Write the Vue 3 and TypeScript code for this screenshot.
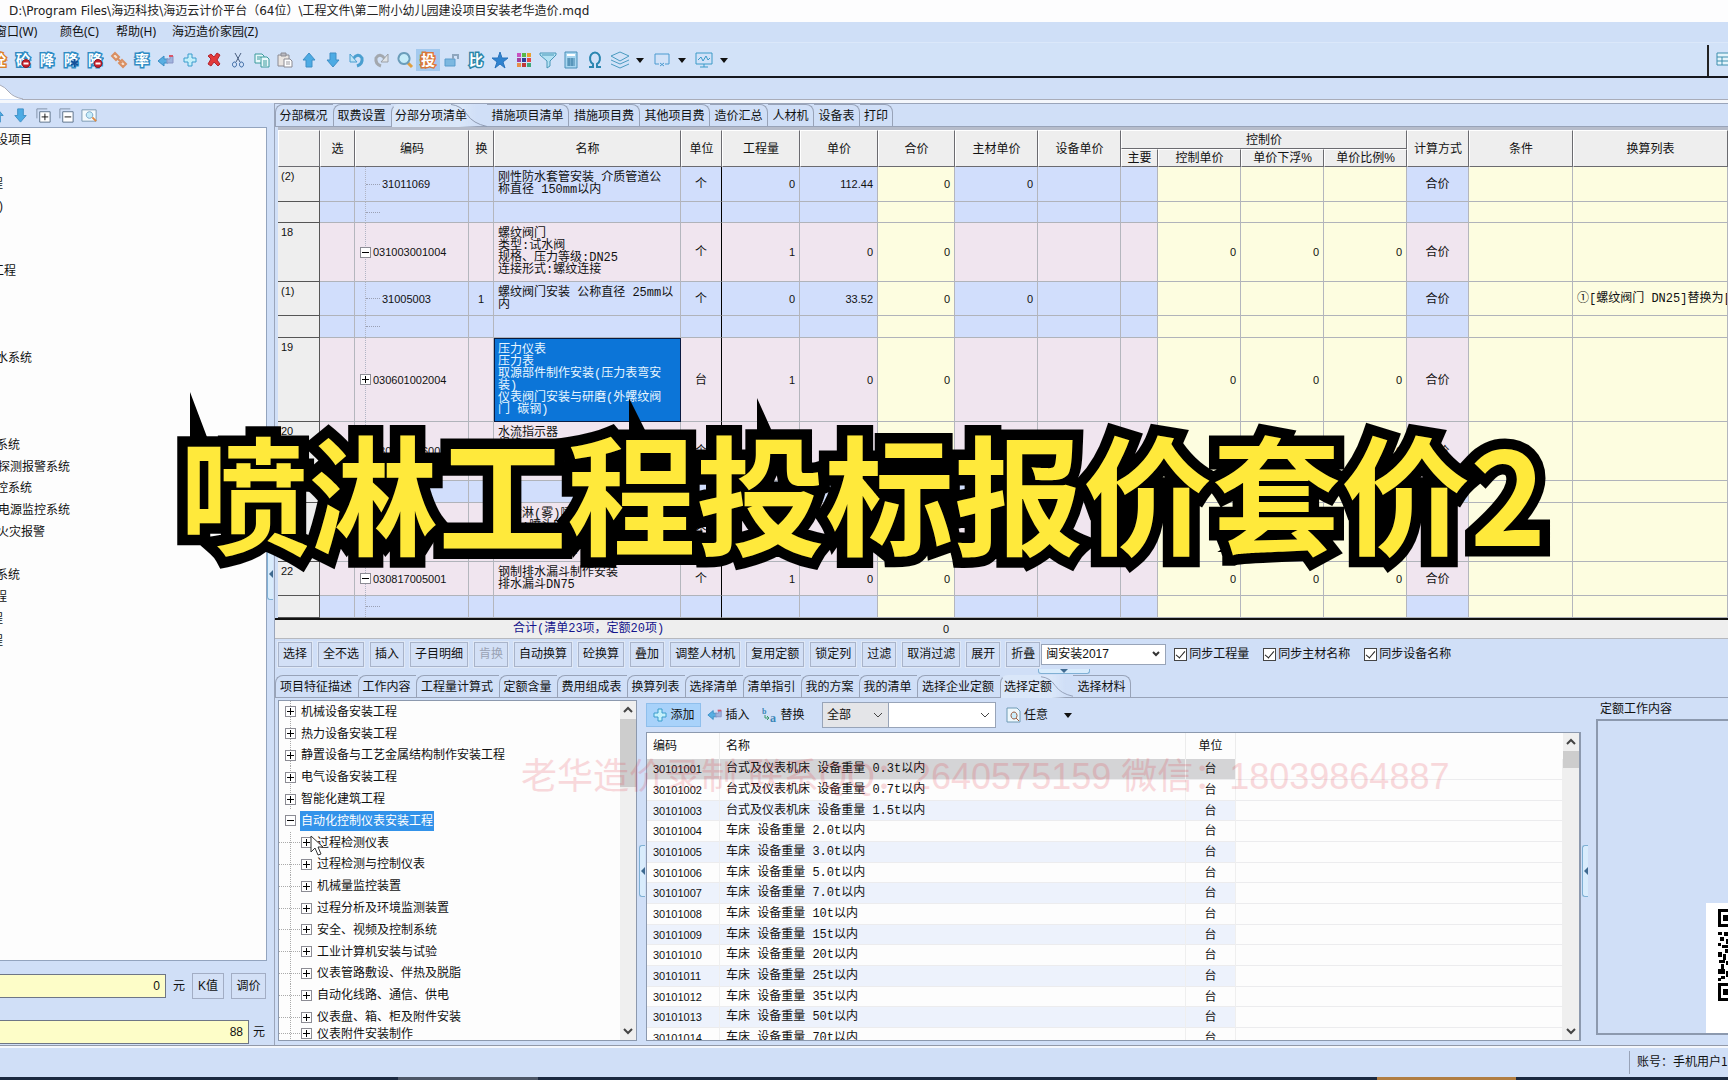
<script setup lang="ts">
import { ref } from 'vue'

interface Shape { d: string; fill?: string; stroke?: string; w?: number }
interface Icon { name: string; glyph?: string; tint?: string; shapes?: Shape[]; on?: boolean; menu?: boolean }

const blue = '#2f8cc4'
const minus: Shape[] = [
  { d: 'M11 7.500a4 4 0 1 0 .01 0z', fill: '#c8202c', stroke: '#8e1520' },
  { d: 'M8.500 11.500h5', stroke: '#fff', w: 2 },
]
const arrowLeft: Shape[] = [
  { d: 'M0 9l6-5v3h4v4H6v3z', fill: '#58aee2', stroke: '#3a8ec4' },
  { d: 'M9 7h3V4h3v7H9z', fill: '#9fb4dd', stroke: '#8a95c4' },
  { d: 'M11 4h4', stroke: '#d8566a', w: 2 },
]
const plus: Shape[] = [{ d: 'M6 2h4v4h4v4h-4v4H6v-4H2V6h4z', fill: '#c4f0fa', stroke: '#3b9ccc' }]
const up: Shape[] = [{ d: 'M8 1l6 7h-3v7H5V8H2z', fill: '#4cabe4', stroke: '#3f8fc6' }]
const down: Shape[] = [{ d: 'M8 15l6-7h-3V1H5v7H2z', fill: '#4cabe4', stroke: '#3f8fc6' }]

const tools: Icon[] = [
  { name: '锁定', glyph: '砼', tint: '#d9822b' },
  { name: '取消砼', glyph: '砼', tint: blue, shapes: minus },
  { name: '降', glyph: '降', tint: blue },
  { name: '全部降', glyph: '降', tint: blue, shapes: [{ d: 'M11.500 7v8M8 9l7 4M15 9l-7 4', stroke: '#14509a', w: 2 }] },
  { name: '取消降', glyph: '降', tint: blue, shapes: minus },
  { name: '链接', shapes: [{ d: 'M4 1l4 4-3 3-4-4zM11 8l4 4-3 3-4-4zM6 6l5 5', stroke: '#d98f62', w: 2, fill: '#f7e3d2' }] },
  { name: '费率', glyph: '率', tint: blue },
  { name: '插入', shapes: arrowLeft },
  { name: '增加', shapes: plus },
  { name: '删除', shapes: [{ d: 'M2 4l3-2 3 3 3-4 3 2-3 5 3 4-2 2-4-4-3 4-3-2 3-5z', fill: '#e23a3a', stroke: '#b02530' }] },
  { name: '剪切', shapes: [{ d: 'M5 1l5 9M11 1L6 10', stroke: '#4a5f80', w: 1 }, { d: 'M4.500 10a2 2.500 0 1 0 .01 0zM11.500 10a2 2.500 0 1 0 .01 0z', stroke: '#2f5f9c', w: 1 }] },
  { name: '复制', shapes: [{ d: 'M1 2h7l2 2v7H1z', fill: '#e8f8fb', stroke: '#3a9a9c' }, { d: 'M3 5h4M3 7h3', stroke: '#3a9a9c' }, { d: 'M7 5h6l2 2v8H7z', fill: '#e8f8fb', stroke: '#3a9a9c' }, { d: 'M9 9h4M9 11h4M9 13h4', stroke: '#3a9a9c' }] },
  { name: '粘贴', shapes: [{ d: 'M1 3h11v11H1z', fill: '#e9e4e0', stroke: '#8a8a92' }, { d: 'M4 1h5v3H4z', fill: '#b9b9c0', stroke: '#8a8a92' }, { d: 'M7 7h6l2 2v6H7z', fill: '#fff', stroke: '#8a8a92' }, { d: 'M9 10h4M9 12h4', stroke: '#9a9aa0' }] },
  { name: '上移', shapes: up },
  { name: '下移', shapes: down },
  { name: '撤销', shapes: [{ d: 'M4 7q5-7 9-1 1 6-5 8', stroke: '#4a9fd0', w: 3 }, { d: 'M1 2v8h7z', fill: '#bfe4f6', stroke: '#4a9fd0' }] },
  { name: '恢复', shapes: [{ d: 'M12 7q-5-7-9-1-1 6 5 8', stroke: '#a3a8ae', w: 3 }, { d: 'M15 2v8H8z', fill: '#dfe3e6', stroke: '#9a9fa6' }] },
  { name: '查找', shapes: [{ d: 'M10 10l5 5', stroke: '#e0a040', w: 3 }, { d: 'M7 1a5.500 5.500 0 1 0 .01 0z', fill: '#c5ecf9', stroke: '#6a9dba', w: 2 }] },
  { name: '投标', glyph: '投', tint: '#d9783a', on: true },
  { name: '解锁', shapes: [{ d: 'M1 7h10v7H1z', fill: '#7db8e0', stroke: '#5a9ccc' }, { d: 'M9 7V3h5v4', stroke: '#8ea6be', w: 2 }] },
  { name: '对比', glyph: '比', tint: '#2a86a8' },
  { name: '收藏', shapes: [{ d: 'M8 0l2 6h6l-5 4 2 6-5-4-5 4 2-6-5-4h6z', fill: '#2f83d0', stroke: '#2a74bc' }] },
  { name: '颜色', shapes: [
    { d: 'M1 1h4v4H1z', fill: '#c950c0' }, { d: 'M6 1h4v4H6z', fill: '#58b848' }, { d: 'M11 1h4v4h-4z', fill: '#e8a030' },
    { d: 'M1 6h4v4H1z', fill: '#a040a0' }, { d: 'M6 6h4v4H6z', fill: '#303c98' }, { d: 'M11 6h4v4h-4z', fill: '#e04848' },
    { d: 'M1 11h4v4H1z', fill: '#e89048' }, { d: 'M6 11h4v4H6z', fill: '#c03838' }, { d: 'M11 11h4v4h-4z', fill: '#40a878' } ] },
  { name: '筛选', shapes: [{ d: 'M0 1h16v2l-6 6v5l-3 2V9L0 3z', fill: '#b4e2f4', stroke: '#4a97b8' }, { d: 'M2 3h12', stroke: '#4a97b8' }] },
  { name: '计算器', shapes: [{ d: 'M2 0h12v16H2z', fill: '#a8d6f0', stroke: '#4a8fb8' }, { d: 'M4 3h8', stroke: '#fff', w: 2 }, { d: 'M4 7h8M4 9h8M4 11h8M4 13h8M6 6v8M9 6v8', stroke: '#3f80a8' }] },
  { name: '特殊符号', shapes: [{ d: 'M2 15h4v-3a5 6 0 1 1 4 0v3h4', stroke: '#2a86b0', w: 2 }] },
  { name: '图层', menu: true, shapes: [{ d: 'M8 0l9 4-9 5-9-5z', stroke: '#4a9ac0' }, { d: 'M-1 8l9 4 9-4M-1 12l9 4 9-4', stroke: '#4a9ac0' }] },
  { name: '屏幕', menu: true, shapes: [{ d: 'M5 12H1V2h14v10h-4', stroke: '#4a9ad0' }, { d: 'M6 11l4 3M10 11l-4 3', stroke: '#4a9ad0' }] },
  { name: '监控', menu: true, shapes: [{ d: 'M0 1h16v11H0zM8 12v3M4 15h8', stroke: '#3a9ac8' }, { d: 'M2 8l3-3 2 4 3-5 2 4 2-2', stroke: '#3a9ac8' }] },
]

const sideTools: Icon[] = [
  { name: '上移', shapes: up },
  { name: '下移', shapes: down },
  { name: '展开', shapes: [{ d: 'M1 11V1h11', stroke: '#7f92a8' }, { d: 'M4 4h11v11H4z', fill: '#fff', stroke: '#5a7088' }, { d: 'M6 9.500h7M9.500 6v7', stroke: '#111' }] },
  { name: '收起', shapes: [{ d: 'M1 11V1h11', stroke: '#7f92a8' }, { d: 'M4 4h11v11H4z', fill: '#fff', stroke: '#5a7088' }, { d: 'M6 9.500h7', stroke: '#111' }] },
  { name: '查找', shapes: [{ d: 'M0 2h15v12H0z', fill: '#f4fafc', stroke: '#7a98b0' }, { d: 'M8 4a3.500 3.500 0 1 0 .01 0z', fill: '#c5ecf9', stroke: '#7aa8c8' }, { d: 'M11 10l4 4', stroke: '#e08a40', w: 2 }] },
]

const sideNodes: { t: string; end: number }[] = [
  { t: '设项目', end: 32 }, { t: '', end: 0 }, { t: '程', end: 3 }, { t: ')', end: 3 }, { t: '', end: 0 }, { t: '', end: 0 },
  { t: '工程', end: 16 }, { t: '', end: 0 }, { t: '', end: 0 }, { t: '', end: 0 }, { t: '水系统', end: 32 }, { t: '', end: 0 },
  { t: '', end: 0 }, { t: '', end: 0 }, { t: '系统', end: 20 }, { t: '探测报警系统', end: 70 }, { t: '控系统', end: 32 },
  { t: '电源监控系统', end: 70 }, { t: '火灾报警', end: 45 }, { t: '', end: 0 }, { t: '系统', end: 20 }, { t: '程', end: 7 },
  { t: '程', end: 3 }, { t: '程', end: 3 },
]

interface Tab { t: string; w: number; side: 'l' | 'r' | 'on' }
const topTabs: Tab[] = [
  { t: '分部概况', w: 58, side: 'l' }, { t: '取费设置', w: 58, side: 'l' }, { t: '分部分项清单', w: 96, side: 'on' },
  { t: '措施项目清单', w: 82, side: 'r' }, { t: '措施项目费', w: 71, side: 'r' }, { t: '其他项目费', w: 70, side: 'r' },
  { t: '造价汇总', w: 58, side: 'r' }, { t: '人材机', w: 46, side: 'r' }, { t: '设备表', w: 46, side: 'r' }, { t: '打印', w: 33, side: 'r' },
]
const lowTabs: Tab[] = [
  { t: '项目特征描述', w: 83, side: 'l' }, { t: '工作内容', w: 58, side: 'l' }, { t: '工程量计算式', w: 83, side: 'l' },
  { t: '定额含量', w: 58, side: 'l' }, { t: '费用组成表', w: 70, side: 'l' }, { t: '换算列表', w: 58, side: 'l' },
  { t: '选择清单', w: 58, side: 'l' }, { t: '清单指引', w: 58, side: 'l' }, { t: '我的方案', w: 58, side: 'l' },
  { t: '我的清单', w: 58, side: 'l' }, { t: '选择企业定额', w: 83, side: 'l' }, { t: '选择定额', w: 73, side: 'on' },
  { t: '选择材料', w: 58, side: 'r' },
]

const colWidths = [42, 35, 114, 25, 187, 41, 78, 78, 77, 83, 83, 37, 83, 83, 83, 62, 104]

interface Row {
  no: string; kind: 'item' | 'sub'; h: number; code?: string; open?: boolean; swap?: string; name?: string[]
  unit?: string; qty?: string; price?: string; total?: string; main?: string; ctl?: string; mode?: string; list?: string; sel?: boolean
}
const rows: Row[] = [
  { no: '(2)', kind: 'sub', h: 35, code: '31011069', name: ['刚性防水套管安装 介质管道公', '称直径 150mm以内'], unit: '个', qty: '0', price: '112.44', total: '0', main: '0', mode: '合价' },
  { no: '', kind: 'sub', h: 21 },
  { no: '18', kind: 'item', h: 59, code: '031003001004', open: true, name: ['螺纹阀门', '类型:试水阀', '规格、压力等级:DN25', '连接形式:螺纹连接'], unit: '个', qty: '1', price: '0', total: '0', ctl: '0', mode: '合价' },
  { no: '(1)', kind: 'sub', h: 34, code: '31005003', swap: '1', name: ['螺纹阀门安装 公称直径 25mm以', '内'], unit: '个', qty: '0', price: '33.52', total: '0', main: '0', mode: '合价', list: '①[螺纹阀门 DN25]替换为[试水阀]' },
  { no: '', kind: 'sub', h: 22 },
  { no: '19', kind: 'item', h: 84, code: '030601002004', open: false, sel: true, name: ['压力仪表', '压力表', '取源部件制作安装(压力表弯安', '装)', '仪表阀门安装与研磨(外螺纹阀', '门 碳钢)'], unit: '台', qty: '1', price: '0', total: '0', ctl: '0', mode: '合价' },
  { no: '20', kind: 'item', h: 59, code: '030901006001', open: true, name: ['水流指示器', '规格:DN150', '型号:法兰式', '连接形式:法兰'], unit: '个', qty: '1', price: '0', total: '0', ctl: '0', mode: '合价' },
  { no: '', kind: 'sub', h: 22 },
  { no: '21', kind: 'item', h: 59, code: '030901003001', open: true, name: ['水喷淋(雾)喷头', '规格:喷头DN15', '安装部位:吊顶', '连接形式:螺纹'], unit: '个', qty: '1', price: '0', total: '0', ctl: '0', mode: '合价' },
  { no: '22', kind: 'item', h: 34, code: '030817005001', open: true, name: ['钢制排水漏斗制作安装', '排水漏斗DN75'], unit: '个', qty: '1', price: '0', total: '0', ctl: '0', mode: '合价' },
  { no: '', kind: 'sub', h: 22 },
]

const actions = ['选择', '全不选', '插入', '子目明细', '肯换', '自动换算', '砼换算', '叠加', '调整人材机', '复用定额', '锁定列', '过滤', '取消过滤', '展开', '折叠']
const syncs = ref([
  { t: '同步工程量', on: true }, { t: '同步主材名称', on: true }, { t: '同步设备名称', on: true },
])

const chapters: { t: string; lvl: number; open?: boolean }[] = [
  { t: '机械设备安装工程', lvl: 0 }, { t: '热力设备安装工程', lvl: 0 }, { t: '静置设备与工艺金属结构制作安装工程', lvl: 0 },
  { t: '电气设备安装工程', lvl: 0 }, { t: '智能化建筑工程', lvl: 0 }, { t: '自动化控制仪表安装工程', lvl: 0, open: true },
  { t: '过程检测仪表', lvl: 1 }, { t: '过程检测与控制仪表', lvl: 1 }, { t: '机械量监控装置', lvl: 1 }, { t: '过程分析及环境监测装置', lvl: 1 },
  { t: '安全、视频及控制系统', lvl: 1 }, { t: '工业计算机安装与试验', lvl: 1 }, { t: '仪表管路敷设、伴热及脱脂', lvl: 1 },
  { t: '自动化线路、通信、供电', lvl: 1 }, { t: '仪表盘、箱、柜及附件安装', lvl: 1 }, { t: '仪表附件安装制作', lvl: 1 },
]

const quotas = [
  '台式及仪表机床 设备重量 0.3t以内', '台式及仪表机床 设备重量 0.7t以内', '台式及仪表机床 设备重量 1.5t以内',
  '车床 设备重量 2.0t以内', '车床 设备重量 3.0t以内', '车床 设备重量 5.0t以内', '车床 设备重量 7.0t以内',
  '车床 设备重量 10t以内', '车床 设备重量 15t以内', '车床 设备重量 20t以内', '车床 设备重量 25t以内',
  '车床 设备重量 35t以内', '车床 设备重量 50t以内', '车床 设备重量 70t以内',
].map((name, i) => ({ code: String(30101001 + i), name }))
</script>

<template>
  <div class="app">
    <header class="title">D:\Program Files\海迈科技\海迈云计价平台（64位）\工程文件\第二附小幼儿园建设项目安装老华造价.mqd</header>
    <nav class="menu">
      <button class="first">窗口(W)</button><button>颜色(C)</button><button>帮助(H)</button><button>海迈造价家园(Z)</button>
    </nav>

    <div class="toolbar">
      <div class="tools">
        <button v-for="(ic, i) in tools" :key="i" :aria-label="ic.name" :class="{ on: ic.on, drop: ic.menu }">
          <svg width="18" height="18" viewBox="-1 -1 18 18">
            <text v-if="ic.glyph" x="8" y="13" class="glyph" :stroke="ic.tint">{{ ic.glyph }}</text>
            <path v-for="(s, k) in ic.shapes" :key="k" :d="s.d" :fill="s.fill || 'none'" :stroke="s.stroke || 'none'" :stroke-width="s.w || 1" />
          </svg>
          <i v-if="ic.menu" class="caret"></i>
        </button>
      </div>
      <div class="tools-end">
        <svg width="14" height="16" viewBox="0 0 14 16"><path d="M1 2h16v12H1zM1 6h16M6 6v8M1 10h16" fill="#e4f4fb" stroke="#3f8fae" /></svg>
      </div>
    </div>

    <div class="doc-strip">
      <svg width="24" height="22" viewBox="0 0 24 22"><path d="M0 7q5 2 9 7t13 7H0z" fill="#fff" /><path d="M0 7q5 2 9 7t14 7" fill="none" stroke="#a9acb8" /></svg>
    </div>

    <main class="work">
      <aside class="side">
        <div class="side-tools">
          <button v-for="(ic, i) in sideTools" :key="i" :aria-label="ic.name">
            <svg width="17" height="17" viewBox="-1 -1 18 18">
              <path v-for="(s, k) in ic.shapes" :key="k" :d="s.d" :fill="s.fill || 'none'" :stroke="s.stroke || 'none'" :stroke-width="s.w || 1" />
            </svg>
          </button>
        </div>
        <ul class="side-tree">
          <li v-for="(n, i) in sideNodes" :key="i" :style="{ width: n.end + 'px' }">{{ n.t }}</li>
        </ul>
        <div class="sum">
          <input class="money" aria-label="造价合计" value="0" />
          <span>元</span><button>K值</button><button>调价</button>
        </div>
        <div class="sum last">
          <input class="money" aria-label="单方造价" value="88" />
          <span>元</span>
        </div>
      </aside>

      <div class="split-v"><i class="grip"></i></div>

      <section class="content">
        <div class="tabs">
          <button v-for="t in topTabs" :key="t.t" :class="t.side" :style="{ width: t.w + 'px' }">
            <span>{{ t.t }}</span>
            <svg v-if="t.side === 'on'" class="slope" width="36" height="23" viewBox="0 0 36 23"><path d="M0 .5q10 1 16 10t20 12" /></svg>
          </button>
        </div>

        <div class="grid-wrap">
          <table class="grid">
            <colgroup><col v-for="(w, i) in colWidths" :key="i" :style="{ width: w + 'px' }" /><col /></colgroup>
            <thead>
              <tr class="h1">
                <th rowspan="2"></th><th rowspan="2">选</th><th rowspan="2">编码</th><th rowspan="2">换</th><th rowspan="2">名称</th>
                <th rowspan="2">单位</th><th rowspan="2">工程量</th><th rowspan="2">单价</th><th rowspan="2">合价</th><th rowspan="2">主材单价</th>
                <th rowspan="2">设备单价</th><th colspan="4">控制价</th><th rowspan="2">计算方式</th><th rowspan="2">条件</th><th rowspan="2">换算列表</th>
              </tr>
              <tr class="h2"><th>主要</th><th>控制单价</th><th>单价下浮%</th><th>单价比例%</th></tr>
            </thead>
            <tbody>
              <tr v-for="(r, i) in rows" :key="i" :class="r.kind" :style="{ height: r.h + 'px' }">
                <th scope="row">{{ r.no }}</th>
                <td></td>
                <td class="code">
                  <div class="branch">
                    <i v-if="r.kind === 'item'" class="box" :class="{ plus: !r.open }"></i><i v-else class="stub"></i>
                    <span>{{ r.code }}</span>
                  </div>
                </td>
                <td class="c n">{{ r.swap }}</td>
                <td class="name" :class="{ sel: r.sel }"><div v-for="(l, k) in r.name" :key="k">{{ l }}</div></td>
                <td class="c frozen">{{ r.unit }}</td>
                <td class="n">{{ r.qty }}</td><td class="n">{{ r.price }}</td><td class="n y">{{ r.total }}</td>
                <td class="n">{{ r.main }}</td><td></td><td></td>
                <td class="n y">{{ r.ctl }}</td><td class="n y">{{ r.ctl }}</td><td class="n y">{{ r.ctl }}</td>
                <td class="c">{{ r.mode }}</td><td class="y"></td><td class="y list">{{ r.list }}</td>
              </tr>
            </tbody>
          </table>
        </div>
        <div class="totals"><span class="label">合计(清单23项，定额20项)</span><span class="value">0</span></div>

        <div class="actions">
          <button v-for="a in actions" :key="a" :disabled="a === '肯换'">{{ a }}</button>
          <div class="pick lib">
            <select aria-label="定额库"><option>闽安装2017</option></select>
            <svg width="8" height="6" viewBox="0 0 8 6"><path d="M1 1l3 3 3-3" fill="none" stroke="#333" stroke-width="2" /></svg>
          </div>
          <label v-for="s in syncs" :key="s.t"><input v-model="s.on" type="checkbox" />{{ s.t }}</label>
          <i class="grip-h"></i>
        </div>

        <div class="tabs low">
          <button v-for="t in lowTabs" :key="t.t" :class="t.side" :style="{ width: t.w + 'px' }">
            <span>{{ t.t }}</span>
            <svg v-if="t.side === 'on'" class="slope" width="32" height="23" viewBox="0 0 36 23"><path d="M0 .5q10 1 16 10t20 12" /></svg>
          </button>
        </div>

        <div class="lower">
          <div class="chapters">
            <ul>
              <li v-for="c in chapters" :key="c.t" :class="['lvl' + c.lvl, { open: c.open }]">
                <i class="box" :class="{ plus: !c.open }"></i><span>{{ c.t }}</span>
              </li>
            </ul>
            <div class="scroll">
              <svg width="10" height="8" viewBox="0 0 10 8"><path d="M1 6l4-4 4 4" /></svg>
              <i class="thumb long"></i>
              <svg width="10" height="8" viewBox="0 0 10 8"><path d="M1 2l4 4 4-4" /></svg>
            </div>
            <svg class="pointer" width="14" height="21" viewBox="0 0 14 21"><path d="M1 1v16l4-4 3 7 3-1-3-7h5z" fill="#fff" stroke="#333" /></svg>
          </div>
          <div class="split-v inner"><i class="grip"></i></div>

          <div class="finder">
            <div class="finder-bar">
              <button class="act on"><svg width="16" height="16" viewBox="0 0 16 16"><path v-for="(s, k) in plus" :key="k" :d="s.d" :fill="s.fill" :stroke="s.stroke" /></svg>添加</button>
              <button class="act"><svg width="16" height="16" viewBox="0 0 16 18"><path v-for="(s, k) in arrowLeft" :key="k" :d="s.d" :fill="s.fill || 'none'" :stroke="s.stroke" :stroke-width="s.w || 1" /></svg>插入</button>
              <button class="act rep">
                <svg width="16" height="16" viewBox="0 0 16 16"><text x="0" y="7" class="small">b</text><path d="M3 8v3h4M5 9l2 2-2 2" fill="none" stroke="#3a9a6a" /><text x="8" y="15" class="small big">a</text></svg>替换
              </button>
              <div class="pick all"><select aria-label="范围"><option>全部</option></select><svg width="10" height="7" viewBox="0 0 10 7"><path d="M1 1l4 4 4-4" fill="none" stroke="#444" /></svg></div>
              <div class="pick key"><select aria-label="关键字"><option></option></select><svg width="10" height="7" viewBox="0 0 10 7"><path d="M1 1l4 4 4-4" fill="none" stroke="#444" /></svg></div>
              <button class="act any">
                <svg width="16" height="16" viewBox="0 0 16 16"><path d="M1 1h10l3 3v11H1z" fill="#eef8fc" stroke="#6f9ab4" /><path d="M8 5a3 3.500 0 1 0 .01 0zM10 11l3 3" fill="#cdeefa" stroke="#9a5a3a" /></svg>任意<i class="caret"></i>
              </button>
            </div>
            <div class="quota">
              <table>
                <colgroup><col class="q1" /><col class="q2" /><col class="q3" /><col /></colgroup>
                <thead><tr><th>编码</th><th>名称</th><th class="c">单位</th><th></th></tr></thead>
                <tbody>
                  <tr v-for="q in quotas" :key="q.code"><td class="n">{{ q.code }}</td><td class="m">{{ q.name }}</td><td class="c">台</td><td></td></tr>
                </tbody>
              </table>
              <div class="scroll">
                <svg width="10" height="8" viewBox="0 0 10 8"><path d="M1 6l4-4 4 4" /></svg>
                <i class="thumb"></i>
                <svg width="10" height="8" viewBox="0 0 10 8"><path d="M1 2l4 4 4-4" /></svg>
              </div>
            </div>
          </div>
          <div class="split-v inner far"><i class="grip"></i></div>

          <div class="detail">
            <h2>定额工作内容</h2>
            <div class="detail-body">
              <svg width="22" height="130" viewBox="0 0 22 130" role="img" aria-label="二维码">
                <rect width="22" height="130" fill="#fff" />
                <path d="M12 6h20v18H12zM12 80h20v18H12z" fill="#000" />
                <path d="M15 9h14v12H15zM15 83h14v12H15z" fill="#fff" />
                <path d="M17 12h9v6h-9zM17 86h9v6h-9z" fill="#000" />
                <path d="M12 29h4v3h-4zM18 29h4v4h-4zM14 34h4v4h-4zM20 36h2v5h-2zM12 40h3v3h-3zM16 42h6v3h-6zM19 46h3v4h-3zM12 49h4v5h-4zM17 51h3v6h-3zM13 57h6v3h-6zM20 58h2v4h-2zM15 61h3v5h-3zM12 66h7v5h-7zM20 68h2v6h-2zM15 73h4v3h-4zM12 75h3v3h-3z" fill="#000" />
              </svg>
            </div>
          </div>
        </div>
      </section>
    </main>

    <footer class="status"><span>账号：手机用户1</span></footer>
    <div class="taskbar"><i class="t1"></i><i class="t2"></i></div>

    <div class="watermark">老华造价录制 联系QQ：2640575159 微信：18039864887</div>
    <svg class="caption" width="1500" height="240" viewBox="0 0 1500 240">
      <path d="M76 32l17 45H76zM515 38l20 40h-20zM643 38l18 40h-18z" />
      <text x="749" y="186">喷淋工程投标报价套价2</text>
    </svg>
  </div>
</template>

<style>
body { overflow: hidden; }
</style>

<style scoped>
* { box-sizing: border-box; }
.app {
  position: relative; display: flex; flex-direction: column; height: 100vh; overflow: hidden; background: #d0dff7; color: #111;
  font: 12px/16px "Liberation Sans", "Noto Sans CJK SC", sans-serif; white-space: nowrap;
}
button, select, input { font: inherit; color: inherit; margin: 0; padding: 0; border: 0; background: none; border-radius: 0; }
ul { list-style: none; margin: 0; padding: 0; }
i { display: block; flex: none; }
svg { display: block; flex: none; }

.title { height: 22px; padding-left: 9px; background: #fdfdfe; font: 12px/22px "DejaVu Sans", "Noto Sans CJK SC", sans-serif; color: #222; }
.menu { display: flex; height: 20px; background: #cfdff7; font: 12px/20px "Noto Sans", "Noto Sans CJK SC", sans-serif; }
.menu button { width: 56px; text-align: left; }
.menu .first { width: 60px; text-indent: -5px; }
.menu button:last-child { width: auto; }

.toolbar { display: flex; height: 36px; background: #d2e2f8; border-top: 1px solid #dbe8fa; border-bottom: 2px solid #15181f; }
.tools { display: flex; flex: 1; align-items: center; margin-left: -13px; padding-top: 1px; }
.tools button { display: flex; align-items: center; justify-content: center; width: 24px; height: 22px; flex: none; }
.tools button:nth-child(6n) { width: 23px; }
.tools .on { background: #a3c9ee; }
.tools .drop { width: 42px; justify-content: flex-start; gap: 7px; padding-left: 4px; }
.glyph { font: 700 14px "Noto Sans CJK SC"; fill: #fff; stroke-width: 3px; paint-order: stroke; text-anchor: middle; }
.caret { border: 4px solid transparent; border-top: 5px solid #111; border-bottom: 0; }
.tools-end { width: 21px; margin-top: 2px; padding: 6px 0 0 7px; border-left: 2px solid #222; overflow: hidden; }

.doc-strip { height: 25px; border-bottom: 3px solid #f4f7fc; background: linear-gradient(#a9acb8, #a9acb8) 22px 21px / 100% 1px no-repeat; }

.work { display: flex; flex: 1; min-height: 0; border-bottom: 1px solid #9299a8; }

.side { display: flex; flex-direction: column; width: 267px; flex: none; }
.side-tools { display: flex; align-items: center; gap: 6px; height: 24px; margin-left: -11px; }
.side-tree { flex: 1; min-height: 0; padding-top: 1px; background: #fdfdfd; border: 1px solid #93a4be; border-left: 0; overflow: hidden; }
.side-tree li { display: flex; justify-content: flex-end; align-items: center; height: 22px; }
.side-tree li:nth-child(4n) { height: 21px; }
.sum { display: flex; align-items: center; gap: 7px; height: 50px; padding-right: 1px; }
.sum.last { height: 34px; gap: 4px; padding: 7px 2px 0 0; }
.money { flex: 1; min-width: 0; height: 24px; padding-right: 5px; text-align: right; background: #fdfdc8; border: 1px solid #6e7686; border-left: 0; font-family: "Liberation Sans"; }
.sum button { width: 32px; height: 26px; background: #d3e0f6; border: 1px solid #a2adc4; }
.sum button:last-child { width: 35px; }

.split-v { display: flex; align-items: center; width: 7px; flex: none; }
.split-v .grip { width: 6px; height: 52px; border: 1px solid #7fb0d4; border-right: 0; border-radius: 3px 0 0 3px; background: #d9ecfc; }
.split-v .grip::after { content: ""; display: block; margin-top: 21px; border: 4px solid transparent; border-right: 4px solid #3f6a90; border-left: 0; }
.split-v.inner { width: 9px; padding-left: 2px; }
.split-v.far { width: 15px; padding-left: 1px; }

.content { display: flex; flex-direction: column; flex: 1; min-width: 0; border-left: 1px solid #9aa5ba; border-top: 1px solid #9aa5ba; padding-left: 3px; }
.tabs { display: flex; height: 23px; margin-left: -3px; border-bottom: 1px solid #98a3b8; flex: none; }
.tabs button { position: relative; flex: none; height: 23px; border-top: 1px solid #98a3b8; line-height: 20px; }
.tabs .l, .tabs .on { border-left: 1px solid #98a3b8; border-top-left-radius: 8px; }
.tabs .l { padding-right: 2px; }
.tabs .r { border-right: 1px solid #98a3b8; border-top-right-radius: 8px; }
.tabs .on { text-align: left; padding-left: 3px; border-top-color: transparent; background: linear-gradient(90deg, #dae7f9 70%, transparent 90%); }
.slope { position: absolute; right: 0; top: -1px; }
.slope path { fill: none; stroke: #8f9bb2; }

.grid-wrap { border-top: 3px solid #b6bcca; overflow: hidden; flex: none; }
.grid { width: 100%; table-layout: fixed; border-collapse: separate; border-spacing: 0; }
.grid thead th { font-weight: 400; padding: 0; background: #eee; border: 1px solid #fff; border-right-color: #6b6b70; border-bottom: 1px solid #6b6b70; overflow: hidden; }
.h1 { height: 19px; } .h2 { height: 18px; }
.grid .h1 th, .grid .h2 th { line-height: 16px; }
.grid tbody th { font: 11px/14px "Liberation Sans"; text-align: left; vertical-align: top; padding: 2px 0 0 3px; background: #eee; border-right: 1px solid #555; border-bottom: 1px solid #555; }
.grid td { padding: 0; border-right: 1px solid #b4b6bd; border-bottom: 1px solid #b0b3ba; overflow: hidden; }
.item td { background: #f0e5ef; }
.sub td { background: #d1defc; }
.grid td.y { background: #fdfde0; }
.grid .c { text-align: center; }
.grid .n { font: 11px/14px "Liberation Sans"; text-align: right; padding-right: 4px; }
.grid .c.n { text-align: center; padding: 0; }
.grid td.frozen { border-right-color: #000; }
.grid .name, .grid .list, .quota .m, .totals .label { font-family: "Liberation Mono", "Noto Sans CJK SC", monospace; }
.grid .name { padding-left: 4px; line-height: 12px; }
.grid .name.sel { background: #0c75d8; color: #e8f6ff; outline: 1px solid #0a1a40; outline-offset: -1px; }
.grid .list { padding-left: 4px; }
.grid .code { font: 11px/14px "Liberation Sans"; background-image: linear-gradient(#b0b4c4 50%, transparent 50%); background-size: 1px 2px; background-repeat: repeat-y; background-position: 10px 0; }
.branch { display: flex; align-items: center; gap: 2px; padding-left: 5px; }
.box { position: relative; width: 11px; height: 11px; border: 1px solid #8c8c94; background: #fff; }
.box::before, .box.plus::after { content: ""; position: absolute; left: 1px; top: 4px; width: 7px; height: 1px; background: #000; }
.box.plus::after { left: 4px; top: 1px; width: 1px; height: 7px; }
.stub { width: 14px; margin-left: 6px; border-top: 1px dotted #9aa0b4; }

.totals { display: flex; align-items: center; height: 21px; background: #eee; border-top: 2px solid #111; border-bottom: 1px solid #b6b8be; margin-left: -3px; flex: none; }
.totals .label { width: 438px; padding-left: 238px; color: #14148c; }
.totals .value { width: 236px; text-align: right; font: 11px "Liberation Sans"; }

.actions { position: relative; display: flex; align-items: center; gap: 6px; height: 36px; padding-bottom: 6px; flex: none; }
.actions button { height: 25px; padding: 0 4px; border: 1px solid #a9b4ca; background: #d3e0f6; box-shadow: 0 0 0 1px #dfe8f6; }
.actions button:disabled { color: #9aa2b4; }
.actions label { display: flex; align-items: center; gap: 2px; margin-left: 2px; }
.actions label + label { margin-left: 8px; }
.actions input { appearance: none; width: 13px; height: 13px; border: 1px solid #444; background: #fff; display: grid; place-items: center; }
.actions input:checked::after { content: ""; width: 4px; height: 8px; margin-top: -2px; border: solid #222; border-width: 0 1px 1px 0; transform: rotate(40deg); }
.grip-h { position: absolute; left: 760px; bottom: 1px; width: 52px; height: 5px; border: 1px solid #7fb0d4; border-top: 0; border-radius: 0 0 3px 3px; background: #d9ecfc; }
.grip-h::after { content: ""; display: block; width: 0; margin: 0 auto; border: 4px solid transparent; border-top-color: #3f6a90; border-bottom: 0; }

.pick { position: relative; display: flex; align-items: center; }
.pick select { appearance: none; width: 100%; height: 100%; padding-left: 4px; background: #fff; border: 1px solid #98a4b8; }
.pick svg { position: absolute; right: 6px; }
.lib { width: 125px; height: 21px; margin-left: -5px; }

.lower { display: flex; flex: 1; min-height: 0; margin: 2px 0 4px; }
.chapters { position: relative; display: flex; width: 359px; flex: none; background: #fdfdfd; border: 1px solid #8c99ae; overflow: hidden; }
.chapters ul { display: flex; flex-direction: column; flex: 1; min-width: 0; }
.chapters li { display: flex; align-items: center; flex: 1; min-height: 0; gap: 5px; padding-left: 6px; }
.chapters li:last-child { flex: 0 0 12px; }
.chapters .lvl1 { padding-left: 22px; background: linear-gradient(90deg, #aaa 50%, transparent 50%) 12px 50% / 2px 1px repeat-x, linear-gradient(#aaa 50%, transparent 50%) 11px 0 / 1px 2px repeat-y; }
.chapters .lvl1 span { align-self: stretch; display: flex; align-items: center; flex: 1; margin-left: -5px; padding-left: 5px; background: #fdfdfd; }
.chapters .lvl0:not(.open) { background: linear-gradient(#aaa 50%, transparent 50%) 11px 0 / 1px 2px repeat-y; }
.chapters .open span { margin-left: -1px; padding: 2px 1px; background: #3393ea; color: #fff; }
.scroll { display: flex; flex-direction: column; align-items: center; width: 16px; padding: 5px 0; background: #efefef; flex: none; }
.scroll path { fill: none; stroke: #444; stroke-width: 2px; }
.scroll .thumb { width: 16px; height: 17px; margin: 5px 0 auto; background: #cdcdcd; }
.scroll .thumb.long { height: 68px; }
.pointer { position: absolute; left: 31px; top: 134px; }

.finder { display: flex; flex-direction: column; flex: 1; min-width: 0; }
.finder-bar { display: flex; align-items: center; height: 28px; margin: 1px 0 3px; flex: none; }
.act { display: flex; align-items: center; justify-content: center; gap: 2px; width: 55px; height: 24px; }
.act.on { background: #a8d2fa; border: 1px solid #8fbfec; }
.act .caret { margin-left: 14px; }
.act.any { width: 76px; margin-left: 7px; justify-content: flex-start; padding-left: 3px; }
.small { font: 700 8px "Liberation Serif"; fill: #3a86b8; }
.small.big { font-size: 12px; }
.pick.all { width: 67px; height: 26px; margin-left: 11px; }
.pick.all select { background: #e4e5e8; }
.pick.key { width: 108px; height: 26px; margin-left: -1px; }
.quota { display: flex; flex: 1; min-height: 0; background: #fdfdfd; border: 1px solid #8c99ae; border-right-width: 2px; overflow: hidden; }
.quota table { flex: 1; table-layout: fixed; border-collapse: separate; border-spacing: 0; align-self: flex-start; width: 100%; }
.q1 { width: 73px; } .q2 { width: 466px; } .q3 { width: 50px; }
.quota th { height: 26px; padding: 0 0 0 6px; font-weight: 400; text-align: left; border-right: 1px solid #ececec; }
.quota th:last-child { border-right: 0; }
.quota tr { height: 21px; }
.quota tbody tr:nth-child(3n) { height: 20px; }
.quota td { padding: 0 0 0 6px; border-bottom: 1px solid #ececee; border-right: 1px solid #efefef; line-height: 16px; }
.quota td.n { font-family: "Liberation Sans"; font-size: 11px; }
.quota th.c, .quota td.c { text-align: center; padding: 0; }
.quota tbody tr:nth-child(odd) td:not(:last-child) { background: #edf2fc; }
.quota tbody tr:first-child td:not(:last-child) { background: #d4d4d6; }

.detail { display: flex; flex-direction: column; width: 132px; flex: none; padding-bottom: 6px; }
.detail h2 { margin: 0; padding: 0 0 1px 4px; height: 19px; font-size: 12px; line-height: 18px; font-weight: 400; }
.detail-body { display: flex; flex: 1; justify-content: flex-end; align-items: flex-end; border: 2px solid #8c99ae; border-right: 0; }

.status { display: flex; justify-content: flex-end; height: 31px; padding: 3px 0 3px; border-top: 2px solid #f4f7fc; flex: none; }
.status span { width: 99px; padding: 2px 0 0 7px; border-left: 1px solid #98a3b8; overflow: hidden; font-family: "Noto Sans CJK SC", sans-serif; }
.taskbar { display: flex; height: 3px; background: #1b2940; flex: none; }
.t1 { width: 140px; margin-left: 398px; background: #4c5666; }
.t2 { width: 139px; margin-left: 839px; background: #b07d42; }

.watermark { position: absolute; left: 521px; top: 752px; font: 36px/50px "Liberation Sans", "Noto Sans CJK SC", sans-serif; color: #e02838; opacity: 0.17; pointer-events: none; }
.caption { position: absolute; left: 50%; top: 360px; margin-left: -750px; pointer-events: none; }
.caption text { font: 700 129px "Noto Sans CJK SC", sans-serif; text-anchor: middle; fill: #ffe93b; stroke: #000; stroke-width: 21px; stroke-miterlimit: 10; paint-order: stroke; }
</style>
